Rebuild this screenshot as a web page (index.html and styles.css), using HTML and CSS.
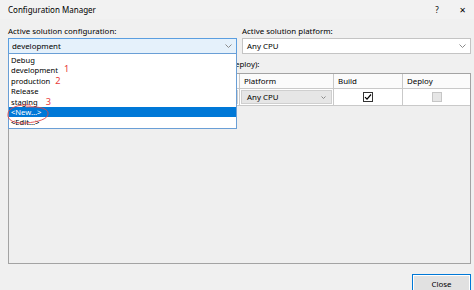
FILE: index.html
```html
<!DOCTYPE html>
<html>

<head>
  <title>Configuration Manager</title>
  <link rel="stylesheet" href="styles.css">
</head>

<body>
  <div class="dialog">
    <div class="titlebar">
      <span class="title">Configuration Manager</span>
      <span class="title-help">?</span>
      <span class="title-close">&#x2715;</span>
    </div>

    <div class="content">
      <div class="selectors">
        <div class="field">
          <label>Active solution configuration:</label>
          <div class="combo-wrap">
            <div class="combo combo-open">
              <span>development</span>
              <svg class="chevron" width="7" height="4" viewBox="0 0 7 4"><path d="M0.5 0.5 L3.5 3.5 L6.5 0.5" /></svg>
            </div>
            <!-- open dropdown list lies over the content below -->
            <ul class="dropdown">
              <li>Debug</li>
              <li>development<span class="mark mark-1">1</span></li>
              <li>production<span class="mark mark-2">2</span></li>
              <li>Release</li>
              <li>staging<span class="mark mark-3">3</span></li>
              <li class="selected">&lt;New...&gt;</li>
              <li>&lt;Edit...&gt;</li>
              <svg class="circle" width="50" height="24" viewBox="0 0 50 24">
                <path d="M27 2 C14 1 4 5 4 11 C3 17 10 21 22 20 C34 19 44 16 44 11 C45 6 36 3 22 4" />
              </svg>
            </ul>
          </div>
        </div>

        <div class="field">
          <label>Active solution platform:</label>
          <div class="combo">
            <span>Any CPU</span>
            <svg class="chevron" width="7" height="4" viewBox="0 0 7 4"><path d="M0.5 0.5 L3.5 3.5 L6.5 0.5" /></svg>
          </div>
        </div>
      </div>

      <p class="contexts"><span class="contexts-hidden"></span>eploy):</p>

      <div class="grid">
        <!-- project and configuration columns sit under the open list -->
        <div class="grid-row grid-head">
          <div class="cell"></div>
          <div class="cell"></div>
          <div class="cell">Platform</div>
          <div class="cell">Build</div>
          <div class="cell">Deploy</div>
        </div>
        <div class="grid-row grid-body">
          <div class="cell"></div>
          <div class="cell">
            <div class="cell-combo"></div>
          </div>
          <div class="cell">
            <div class="cell-combo">
              <span>Any CPU</span>
              <svg class="chevron" width="5" height="3" viewBox="0 0 5 3"><path d="M0.5 0.5 L2.5 2.5 L4.5 0.5" /></svg>
            </div>
          </div>
          <div class="cell cell-center">
            <span class="checkbox">
              <svg width="8" height="8" viewBox="0 0 8 8"><path d="M1 4.2 L3 6.2 L7 1.5" /></svg>
            </span>
          </div>
          <div class="cell cell-center">
            <span class="checkbox checkbox-disabled"></span>
          </div>
        </div>
      </div>
    </div>

    <div class="footer">
      <button class="btn-close">Close</button>
    </div>
  </div>
</body>

</html>
```

FILE: styles.css
```css
* {
  box-sizing: border-box;
}

body {
  margin: 0;
  background-color: #f0f0f0;
  font-family: "Noto Sans", "DejaVu Sans", sans-serif;
  font-size: 7.9px;
  color: #000;
  overflow: hidden;
}

.dialog {
  width: 474px;
  height: 290px;
  display: flex;
  flex-direction: column;
  background-color: #f0f0f0;
  overflow: hidden;
}

.dialog > div {
  flex-shrink: 0;
}

/* Title bar */
.titlebar {
  height: 19px;
  display: flex;
  align-items: center;
  padding: 0 8px 0 8px;
  background-color: #f2f2f2;
}

.title {
  flex: 1;
  font-size: 8px;
}

.title-help {
  width: 30px;
  font-size: 8px;
  text-align: center;
}

.title-close {
  width: 14px;
  font-size: 8px;
  text-align: right;
}

/* Main content */
.content {
  padding: 7px 3px 0 8px;
}

.selectors {
  display: flex;
  gap: 5px;
}

.field {
  flex: 1;
  display: flex;
  flex-direction: column;
  gap: 2px;
}

.field label {
  line-height: 10px;
}

.combo-wrap {
  position: relative;
  z-index: 2;
}

.combo {
  height: 16px;
  display: flex;
  align-items: center;
  justify-content: space-between;
  padding: 0 4px 0 4px;
  background-color: #fff;
  border: 1px solid #c4c4c4;
}

.combo-open {
  background-color: #e5f1fb;
  border-color: #5b9ee0;
  padding-left: 3px;
}

.chevron path {
  fill: none;
  stroke: #8a8a8a;
  stroke-width: 1;
}

/* Open list of configurations */
.dropdown {
  position: absolute;
  left: 0;
  right: 0;
  top: 15px;
  margin: 0;
  padding: 1px 0 0 0;
  list-style: none;
  background-color: #fff;
  border: 1px solid #6a9fd6;
  font-size: 7.6px;
}

.dropdown li {
  height: 10.4px;
  line-height: 10.4px;
  padding-left: 2px;
  white-space: nowrap;
}

.dropdown .selected {
  background-color: #0078d7;
  color: #fff;
}

.mark {
  color: #e8393a;
  font-size: 9.2px;
  line-height: 8px;
}

.mark-1 {
  margin-left: 6px;
  vertical-align: 1px;
}

.mark-2 {
  margin-left: 5px;
}

.mark-3 {
  margin-left: 8px;
}

.circle {
  position: absolute;
  left: -5px;
  top: 49px;
}

.circle path {
  fill: none;
  stroke: #e0474a;
  stroke-width: 0.9;
}

.contexts {
  margin: 5px 0 0 0;
  line-height: 10px;
  display: flex;
}

/* the start of this label is covered by the open list */
.contexts-hidden {
  width: 227px;
}

/* Project grid */
.grid {
  margin-top: 4px;
  height: 191px;
  border: 1px solid #a3a3a3;
  background-color: #efefef;
}

.grid-row {
  display: grid;
  grid-template-columns: 115px 115px 94px 69px 1fr;
}

.grid-head {
  height: 15px;
  background-color: #fbfbfb;
  border-bottom: 1px solid #c9c9c9;
}

.grid-body {
  height: 17px;
  background-color: #fff;
  border-bottom: 1px solid #c9c9c9;
}

.cell {
  display: flex;
  align-items: center;
  padding-left: 4px;
  border-left: 1px solid #c9c9c9;
}

.cell:first-child {
  border-left: none;
}

.grid-body .cell {
  padding: 1px;
}

.cell-center {
  justify-content: center;
}

.cell-combo {
  flex: 1;
  height: 14px;
  display: flex;
  align-items: center;
  justify-content: space-between;
  padding: 0 5px 0 5px;
  background-color: #e6e6e6;
  border: 1px solid #cfcfcf;
}

.checkbox {
  width: 10px;
  height: 10px;
  display: flex;
  align-items: center;
  justify-content: center;
  background-color: #fff;
  border: 1px solid #333;
}

.checkbox path {
  fill: none;
  stroke: #000;
  stroke-width: 1.2;
}

.checkbox-disabled {
  background-color: #e6e6e6;
  border-color: #c6c6c6;
}

/* Footer */
.footer {
  display: flex;
  justify-content: flex-end;
  padding: 10px 3px 0 0;
}

.btn-close {
  width: 59px;
  height: 19px;
  font-family: "Noto Sans", "DejaVu Sans", sans-serif;
  font-size: 7.9px;
  background-color: #e1e1e1;
  border: 1px solid #0078d7;
  box-shadow: inset 0 0 0 1px #fff;
  padding: 0;
}
```
